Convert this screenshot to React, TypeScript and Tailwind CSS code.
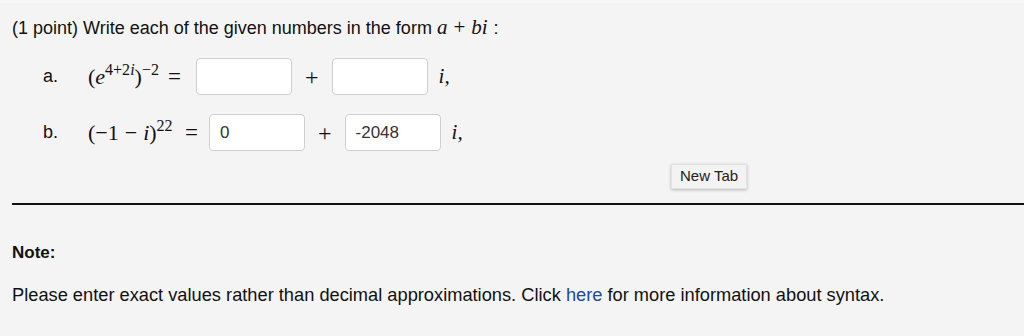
import React from 'react';

const sans = { fontFamily: '"Liberation Sans", Arial, sans-serif' };
const serif = { fontFamily: '"Liberation Serif", "Times New Roman", serif' };

function Box({ value }: { value?: string }) {
  return (
    <input
      readOnly
      value={value ?? ''}
      className="w-[96px] h-[37px] rounded-[4px] border border-[#cfcfcf] bg-white px-[10px] text-[17px] text-[#333] outline-none"
      style={sans}
    />
  );
}

function Sup({ children }: { children: React.ReactNode }) {
  return <sup className="text-[16px] relative top-[-9px] align-baseline">{children}</sup>;
}

function Row({
  label,
  math,
  mathW,
  a,
  b,
}: {
  label: string;
  math: React.ReactNode;
  mathW: string;
  a?: string;
  b?: string;
}) {
  return (
    <div className="flex items-center h-[37px]">
      <span className="w-[76px] pl-[31px] text-[18px] text-[#111]" style={sans}>
        {label}
      </span>
      <span className={`${mathW} flex items-baseline text-[22px] text-[#111] whitespace-nowrap`} style={serif}>
        {math}
      </span>
      <Box value={a} />
      <span className="mx-[13px] text-[24px] leading-none text-[#111]" style={serif}>+</span>
      <Box value={b} />
      <span className="ml-[11px] text-[21px] italic text-[#111]" style={serif}>
        i,
      </span>
    </div>
  );
}

export default function App() {
  return (
    <div className="w-[1024px] h-[336px] bg-[#f4f4f4] border-t-[3px] border-[#f8f8f8] text-[#111]" style={sans}>
      <div className="pl-[12px] pt-[14px]">
        <p className="text-[18px] leading-[20px]">
          (1 point) Write each of the given numbers in the form{' '}
          <span className="text-[21px] italic" style={serif}>a</span>
          <span className="text-[21px] mx-[6px]" style={serif}>+</span>
          <span className="text-[21px] italic" style={serif}>bi</span>
          <span className="ml-[6px]">:</span>
        </p>

        <div className="mt-[20px] flex flex-col gap-[19px]">
          <Row
            label="a."
            mathW="w-[108px]"
            math={
              <>
                <span>(</span>
                <i>e</i>
                <Sup>
                  4+2<i>i</i>
                </Sup>
                <span>)</span>
                <Sup>−2</Sup>
                <span className="ml-auto mr-[15px] text-[23px] leading-none">=</span>
              </>
            }
          />
          <Row
            label="b."
            mathW="w-[121px]"
            math={
              <>
                <span>(−1</span>
                <span className="mx-[6px]">−</span>
                <i>i</i>
                <span>)</span>
                <Sup>22</Sup>
                <span className="ml-auto mr-[11px] text-[23px] leading-none">=</span>
              </>
            }
            a="0"
            b="-2048"
          />
        </div>

        <div className="mt-[13px] pl-[659px]">
          <button
            className="h-[25px] px-[8px] bg-[#f3f3f3] border border-[#e2e2e2] text-[15px] text-[#222] shadow-[0_1px_3px_rgba(0,0,0,0.25)]"
            style={sans}
          >
            New Tab
          </button>
        </div>

        <div className="mt-[14px] h-[2px] bg-[#111]" />

        <p className="mt-[38px] text-[17px] font-bold leading-[20px]">Note:</p>
        <p className="mt-[22px] text-[18.25px] leading-[20px]">
          Please enter exact values rather than decimal approximations. Click{' '}
          <a className="text-[#1d4a9a]">here</a> for more information about syntax.
        </p>
      </div>
    </div>
  );
}
